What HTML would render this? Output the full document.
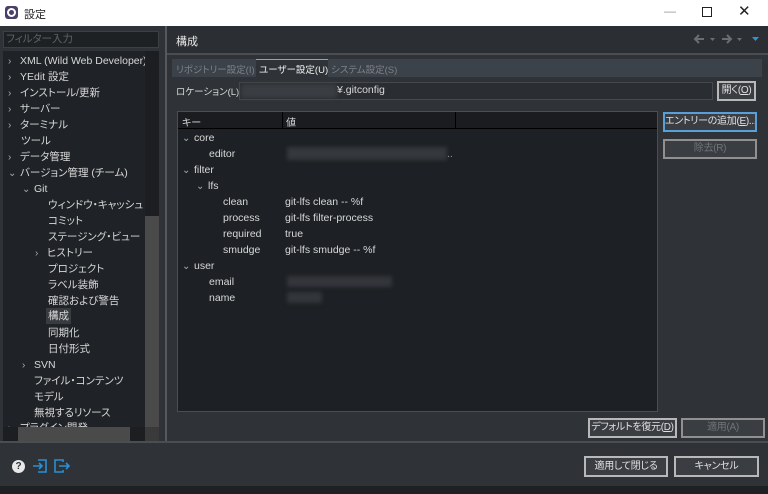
<!DOCTYPE html><html><head><meta charset="utf-8"><style>
*{margin:0;padding:0;box-sizing:border-box}
body{width:768px;height:494px;background:#2f3337;font-family:"Liberation Sans","Noto Sans CJK JP",sans-serif;font-size:11px;color:#d8d8d8;position:relative;overflow:hidden;font-feature-settings:"palt";}
.a{position:absolute;white-space:nowrap}
.btn{position:absolute;border:2px solid #b8b8b8;background:#3a3e43;color:#e0e0e0;text-align:center;font-size:10px;line-height:16px;white-space:nowrap;overflow:hidden;letter-spacing:-0.3px}
.tr{position:absolute;left:0;font-size:10.5px;color:#d8d8d8;white-space:nowrap;line-height:14px}
.chev{color:#aaa;font-size:10px;display:inline-block;width:12px}
</style></head><body>
<div class="a" style="left:0;top:0;width:768px;height:26px;background:#fff"></div>
<div class="a" style="left:5px;top:6px;width:13px;height:13px;border-radius:3px;background:#4a3f6a"></div>
<div class="a" style="left:7px;top:8px;width:9px;height:9px;border-radius:50%;border:2px solid #fff"></div>
<div class="a" style="left:24px;top:6px;color:#222;font-size:11px">設定</div>
<div class="a" style="left:664px;top:4px;color:#999;font-size:12px">—</div>
<div class="a" style="left:702px;top:7px;width:10px;height:10px;border:1px solid #222"></div>
<div class="a" style="left:738px;top:2px;color:#222;font-size:15px">✕</div>
<div class="a" style="left:0;top:486px;width:768px;height:8px;background:#1e2023"></div>
<!-- left panel -->
<div class="a" style="left:3px;top:31px;width:156px;height:17px;background:#1e2124;border:1px solid #3c4045;color:#5e6266;font-size:10.5px;padding-left:2px;line-height:15px">フィルター入力</div>
<div class="a" style="left:3px;top:51px;width:156px;height:390px;background:#1f2226;overflow:hidden">
<div style="position:absolute;left:0;top:0;width:143px;height:376px;overflow:hidden">
<div class="tr" style="top:3px;left:5px"><span class="chev">›</span>XML (Wild Web Developer)</div>
<div class="tr" style="top:19px;left:5px"><span class="chev">›</span>YEdit 設定</div>
<div class="tr" style="top:35px;left:5px"><span class="chev">›</span>インストール/更新</div>
<div class="tr" style="top:51px;left:5px"><span class="chev">›</span>サーバー</div>
<div class="tr" style="top:67px;left:5px"><span class="chev">›</span>ターミナル</div>
<div class="tr" style="top:83px;left:18px">ツール</div>
<div class="tr" style="top:99px;left:5px"><span class="chev">›</span>データ管理</div>
<div class="tr" style="top:115px;left:5px"><span class="chev">⌄</span>バージョン管理 (チーム)</div>
<div class="tr" style="top:131px;left:19px"><span class="chev">⌄</span>Git</div>
<div class="tr" style="top:147px;left:45px">ウィンドウ・キャッシュ</div>
<div class="tr" style="top:163px;left:45px">コミット</div>
<div class="tr" style="top:179px;left:45px">ステージング・ビュー</div>
<div class="tr" style="top:195px;left:32px"><span class="chev">›</span>ヒストリー</div>
<div class="tr" style="top:211px;left:45px">プロジェクト</div>
<div class="tr" style="top:227px;left:45px">ラベル装飾</div>
<div class="tr" style="top:243px;left:45px">確認および警告</div>
<div class="tr" style="top:257px;left:43px;background:#383c40;padding:1px 2px">構成</div>
<div class="tr" style="top:275px;left:45px">同期化</div>
<div class="tr" style="top:291px;left:45px">日付形式</div>
<div class="tr" style="top:307px;left:19px"><span class="chev">›</span>SVN</div>
<div class="tr" style="top:323px;left:31px">ファイル・コンテンツ</div>
<div class="tr" style="top:339px;left:31px">モデル</div>
<div class="tr" style="top:355px;left:31px">無視するリソース</div>
<div class="tr" style="top:370px;left:5px"><span class="chev">›</span>プラグイン開発</div>
</div>
<div class="a" style="left:142px;top:0;width:14px;height:376px;background:#1c1e21"></div>
<div class="a" style="left:142px;top:165px;width:14px;height:211px;background:#4a4a4a"></div>
<div class="a" style="left:0;top:376px;width:156px;height:14px;background:#1c1e21"></div>
<div class="a" style="left:15px;top:376px;width:112px;height:14px;background:#4a4a4a"></div>
<div class="a" style="left:142px;top:376px;width:14px;height:14px;background:#3a3a3a"></div>
</div>
<div class="a" style="left:165px;top:26px;width:2px;height:416px;background:#55595d"></div>
<div class="a" style="left:0;top:441px;width:768px;height:2px;background:#4a4e52"></div>
<!-- right header -->
<div class="a" style="left:167px;top:26px;width:601px;height:28px;background:#2b2f33"></div>
<div class="a" style="left:167px;top:53px;width:601px;height:2px;background:#4a4e52"></div>
<div class="a" style="left:176px;top:33px;font-size:11px;color:#e8e8e8">構成</div>
<svg class="a" style="left:692px;top:32px" width="70" height="14" viewBox="0 0 70 14"><g stroke="#6a6e72" stroke-width="2" fill="none"><path d="M12 7H3M7 3L3 7l4 4"/><path d="M30 7h9M35 3l4 4-4 4"/></g><path d="M18 6h5l-2.5 3z M45 6h5l-2.5 3z" fill="#6a6e72"/><path d="M60 5h7l-3.5 4z" fill="#3a8fd0"/></svg>
<!-- tabs -->
<div class="a" style="left:172px;top:59px;width:590px;height:18px;background:#3c4249"></div>
<div class="a" style="left:176px;top:62px;color:#7c8288;font-size:9.5px">リポジトリー設定(I)</div>
<div class="a" style="left:256px;top:59px;width:72px;height:19px;background:#2f3337;border-top:1px solid #c8a040"></div>
<div class="a" style="left:259px;top:62px;color:#f0f0f0;font-size:9.5px">ユーザー設定(U)</div>
<div class="a" style="left:331px;top:62px;color:#7c8288;font-size:9.5px">システム設定(S)</div>
<div class="a" style="left:176px;top:84px;font-size:9.5px">ロケーション(L):</div>
<div class="a" style="left:239px;top:82px;width:474px;height:18px;background:#2a2d31;border:1px solid #45494d"></div>
<div class="a" style="left:241px;top:84px;width:96px;height:14px;background:#3a3e42;filter:blur(2px)"></div>
<div class="a" style="left:337px;top:84px;font-size:10.5px">¥.gitconfig</div>
<div class="btn" style="left:717px;top:81px;width:39px;height:20px">開く(<u>O</u>)</div>
<!-- table -->
<div class="a" style="left:177px;top:111px;width:481px;height:301px;background:#1d2024;border:1px solid #4a4e52"></div>
<div class="a" style="left:178px;top:112px;width:479px;height:17px;background:#1a1c20;border-bottom:1px solid #000"></div>
<div class="a" style="left:282px;top:112px;width:1px;height:17px;background:#000"></div>
<div class="a" style="left:455px;top:112px;width:1px;height:17px;background:#000"></div>
<div class="a" style="left:182px;top:114px;font-size:10px">キー</div>
<div class="a" style="left:286px;top:114px;font-size:10px">値</div>
<div style="font-size:10.5px">
<div class="a" style="left:182px;top:132px"><span class="chev">⌄</span>core</div>
<div class="a" style="left:209px;top:148px">editor</div>
<div class="a" style="left:287px;top:147px;width:160px;height:13px;background:#35383c;filter:blur(2px)"></div>
<div class="a" style="left:447px;top:148px;color:#999">..</div>
<div class="a" style="left:182px;top:164px"><span class="chev">⌄</span>filter</div>
<div class="a" style="left:196px;top:180px"><span class="chev">⌄</span>lfs</div>
<div class="a" style="left:223px;top:196px">clean</div><div class="a" style="left:285px;top:196px">git-lfs clean -- %f</div>
<div class="a" style="left:223px;top:212px">process</div><div class="a" style="left:285px;top:212px">git-lfs filter-process</div>
<div class="a" style="left:223px;top:228px">required</div><div class="a" style="left:285px;top:228px">true</div>
<div class="a" style="left:223px;top:244px">smudge</div><div class="a" style="left:285px;top:244px">git-lfs smudge -- %f</div>
<div class="a" style="left:182px;top:260px"><span class="chev">⌄</span>user</div>
<div class="a" style="left:209px;top:276px">email</div>
<div class="a" style="left:287px;top:276px;width:105px;height:11px;background:#33363a;filter:blur(2px)"></div>
<div class="a" style="left:209px;top:292px">name</div>
<div class="a" style="left:287px;top:292px;width:35px;height:11px;background:#33363a;filter:blur(2px)"></div>
</div>
<div class="btn" style="left:663px;top:112px;width:94px;height:20px;border-color:#5aa0d8">エントリーの追加(<u>E</u>)...</div>
<div class="btn" style="left:663px;top:139px;width:94px;height:20px;color:#70757a;border-color:#909090">除去(R)</div>
<div class="btn" style="left:588px;top:418px;width:89px;height:20px">デフォルトを復元(<u>D</u>)</div>
<div class="btn" style="left:681px;top:418px;width:84px;height:20px;color:#70757a;border-color:#909090">適用(A)</div>
<!-- bottom -->
<div class="a" style="left:12px;top:460px;width:13px;height:13px;border-radius:50%;background:#e8e8e8;color:#2f3337;font-size:10px;font-weight:bold;text-align:center;line-height:13px">?</div>
<svg class="a" style="left:32px;top:458px" width="40" height="16" viewBox="0 0 40 16" fill="none" stroke="#2a8fd6" stroke-width="1.6"><path d="M6 2h8v12H6M1 8h9M7 5l3 3-3 3"/><path d="M31 4V2h-8v12h8v-2M27 8h10M34 5l3 3-3 3"/></svg>
<div class="btn" style="left:584px;top:456px;width:84px;height:21px;line-height:17px">適用して閉じる</div>
<div class="btn" style="left:674px;top:456px;width:85px;height:21px;line-height:17px">キャンセル</div>
</body></html>
